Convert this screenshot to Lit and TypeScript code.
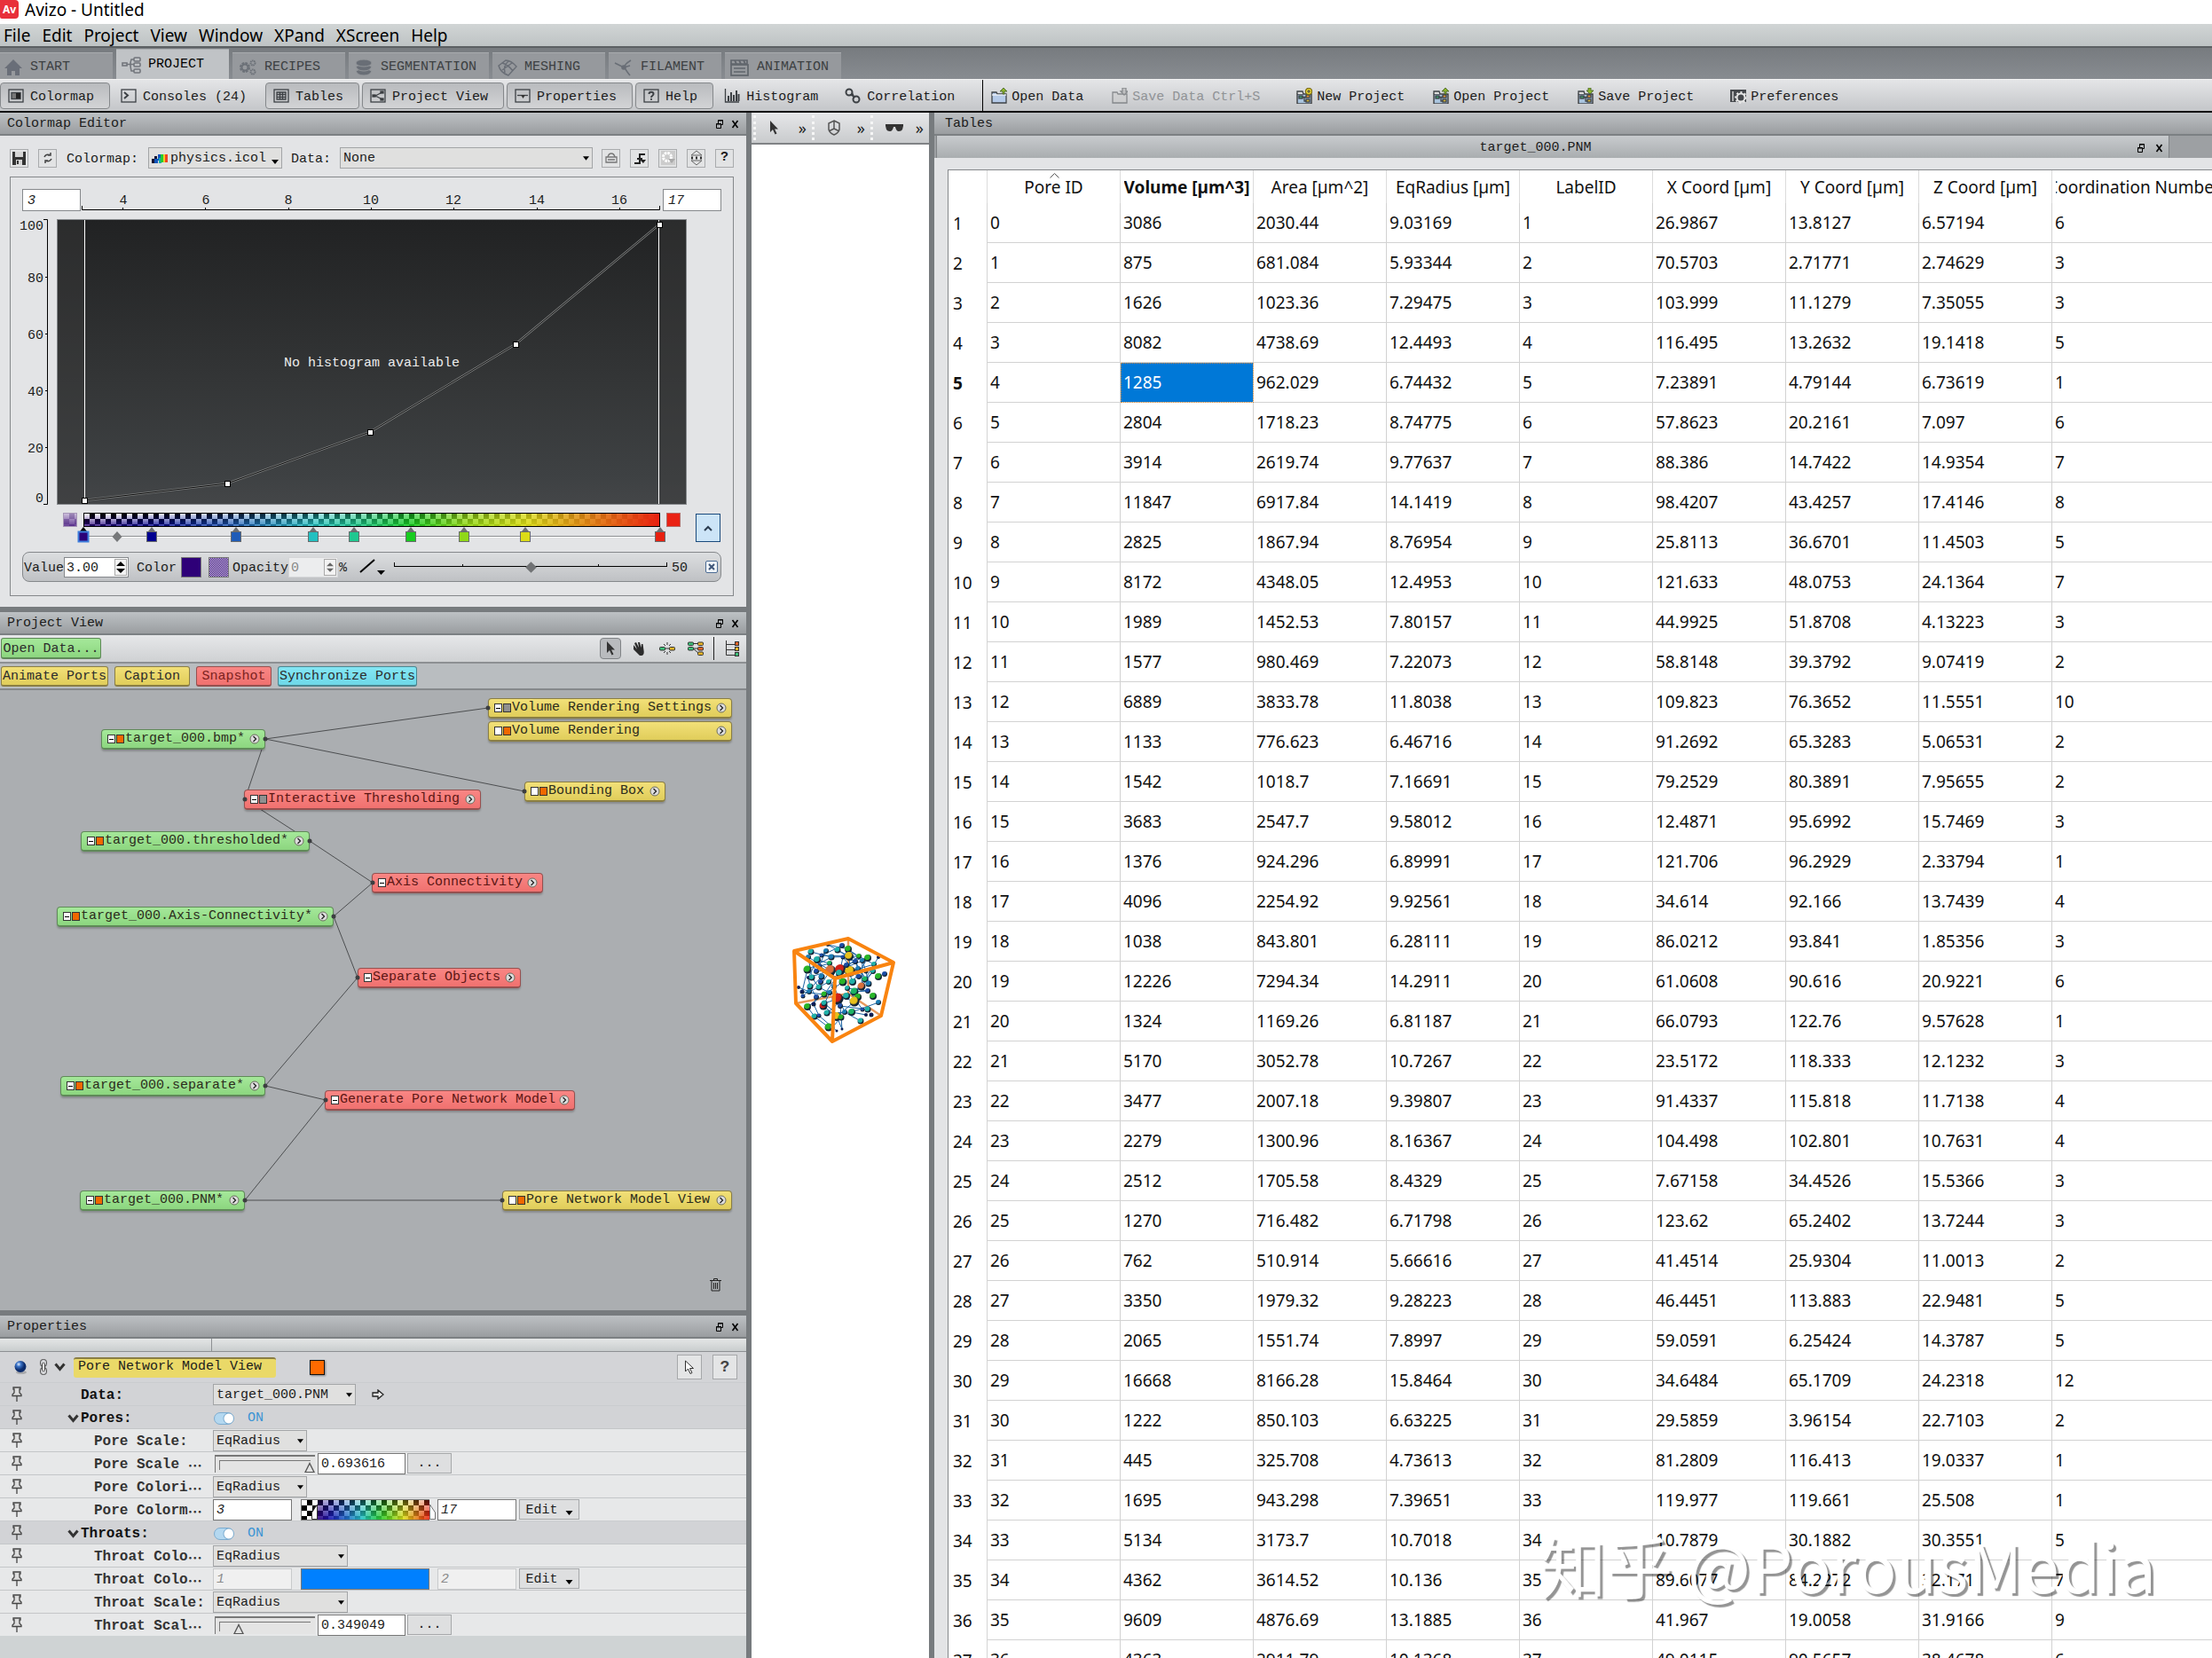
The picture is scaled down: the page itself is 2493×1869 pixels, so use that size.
import { LitElement, html, svg, css, nothing } from "lit";
import { customElement } from "lit/decorators.js";
import { classMap } from "lit/directives/class-map.js";

const base = css`
  * { box-sizing: border-box; }
  :host { display: block; font-family: "Liberation Mono", monospace; font-size: 15px; line-height: 20px; color: #1c1c1c; }
  button, input, select { font: inherit; color: inherit; margin: 0; padding: 0; border-radius: 0; }
  button { display: flex; align-items: center; justify-content: center; background: none; border: none; white-space: nowrap; }
  input { min-width: 0; }
  svg { display: block; flex: none; }
  .panel-title { display: flex; align-items: center; height: 26px; padding: 2px 3px 0 8px; background: linear-gradient(#bdc1c4, #9a9da0); border-bottom: 2px solid #7c8083; font-size: 15px; font-weight: 400; margin: 0; }
  .panel-title .grow { flex: 1; }
  .panel-title button { width: 18px; height: 18px; }
  .flat { width: 21px; height: 21px; border: 1px solid #a9abad; background: #e2e3e4; }
  .combo { display: grid; align-items: center; height: 24px; }
  .combo > * { grid-area: 1 / 1; }
  .combo select { appearance: none; width: 100%; height: 24px; padding: 2px 18px 0 3px; border: 1px solid #a3a5a7; background: #e0e0df; }
  .combo svg { justify-self: end; margin-right: 4px; pointer-events: none; }
`;

const down = (w = 8) => svg`<svg width=${w} height="8" viewBox="0 0 8 8"><path d="M0 2h8L4 7z" fill="#000"/></svg>`;
const restore = svg`<svg width="10" height="12" viewBox="0 0 10 12" fill="none" stroke="#000"><path d="M3.5 5V1.5h5v5H7M3 2h6"/><path d="M1.5 5.500h5v5h-5zM1 6h6"/></svg>`;
const cross = svg`<svg width="10" height="10" viewBox="0 0 10 10" stroke="#000" stroke-width="1.600"><path d="M1.500 1l6 8M7.500 1l-6 8"/></svg>`;
const panelButtons = html`<button aria-label="Float">${restore}</button><button aria-label="Close">${cross}</button>`;
const arrowCursor = svg`<svg width="12" height="16" viewBox="0 0 12 16"><path d="M2 0v13l3-3 2.500 5.500 2-1-2.500-5h4z" fill="#333"/></svg>`;

const box18 = (inner: unknown) => svg`<svg width="18" height="18" viewBox="0 0 18 18" fill="none" stroke="#3d4145" stroke-width="1.300">${inner}</svg>`;
const frame = svg`<rect x="1" y="2" width="16" height="14"/>`;
const graph = svg`<rect x="1" y="7" width="16" height="11" fill="#a9c4de" stroke="#333"/><path d="M1 7V4h6l1 3" fill="#ddd"/><rect x="3" y="9" width="4" height="3" fill="#3c9c6c"/><rect x="11" y="8" width="4" height="3" fill="#e8963c"/><rect x="11" y="13" width="4" height="3" fill="#d3b53c"/><path d="M7 10.500h4M9 10.500V15h2"/>`;

const toolIcons: Record<string, unknown> = {
  colormap: box18(svg`${frame}<rect x="4" y="5.500" width="10" height="7" fill="#777"/><rect x="9" y="6" width="5" height="6" fill="#222" stroke="none"/>`),
  console: box18(svg`${frame}<path d="M4 5l4 3.500L4 12" stroke-width="2"/>`),
  tables: box18(svg`${frame}<path d="M4 5h10v8H4zM4 7.500h10M4 10.500h10M7.500 5v8M10.500 5v8"/>`),
  project: box18(svg`${frame}<path d="M14 5L6 9l8 4"/><rect x="3" y="8" width="3" height="2" fill="#333"/><rect x="12" y="4" width="3" height="2" fill="#333"/><rect x="12" y="12" width="3" height="2" fill="#333"/>`),
  properties: box18(svg`${frame}<path d="M3 8.500h12"/><path d="M7 8h5l-2.500 4z" fill="#333" stroke="none"/>`),
  help: box18(svg`${frame}<path d="M6.500 7c0-3 5-3 5 0 0 2-2.500 1.500-2.500 4M9 12v1.800" stroke-width="2"/>`),
  histogram: box18(svg`<path d="M1.500 1v15H17"/><path d="M5 15V9M8 15V5M11 15V8M14 15V3M16.500 15V7" stroke-width="2"/>`),
  correlation: box18(svg`<circle cx="5" cy="5" r="3.500" stroke-width="2"/><circle cx="13" cy="13" r="3.500" stroke-width="2"/><path d="M6 7.500l6 3M8 5.500l3 6" stroke-width="1.800"/>`),
  openData: box18(svg`<path d="M1 17V5h5l1 2h10v10z" fill="#b5cae8"/><path d="M1 8h16" stroke="#f2f5f8"/><path d="M13 7V4h-3l4-4 4 4h-3v3z" fill="#8cb42c" stroke="#44602a" stroke-width=".8"/>`),
  saveData: box18(svg`<g opacity=".5"><path d="M1 17V5h5l1 2h10v10z" fill="#ccc"/><path d="M12 0h4v4h2l-4 4-4-4h2z" fill="#aaa"/></g>`),
  newProject: box18(svg`${graph}<circle cx="14" cy="4" r="3.600" fill="#f0dc32" stroke="#7a6c18"/><path d="M14 2v4M12 4h4" stroke-width="1"/>`),
  openProject: box18(svg`${graph}<path d="M13 7V4h-3l4-4 4 4h-3v3z" fill="#8cb42c" stroke="#44602a" stroke-width=".8"/>`),
  saveProject: box18(svg`${graph}<path d="M12 0h3v3h3l-4 4-4-4h2z" fill="#8cb42c" stroke="#44602a" stroke-width=".8"/>`),
  preferences: box18(svg`<rect x="0" y="2" width="18" height="14" fill="#45484c" stroke="none"/><circle cx="12" cy="11" r="4.500" stroke="#e6e6e6" stroke-width="2"/><circle cx="12" cy="11" r="6" stroke="#e6e6e6" stroke-width="2" stroke-dasharray="2 2.500"/><path d="M3 4v11" stroke="#e6e6e6"/>`),
};

const tabIcons: Record<string, unknown> = {
  START: svg`<path d="M11 2L1 12h3v8h5v-5h4v5h5v-8h3z" fill="#696e78"/>`,
  PROJECT: svg`<g fill="none" stroke="#72767c" stroke-width="1.600"><rect x="1" y="9" width="5" height="3"/><rect x="14" y="3" width="7" height="4" rx="1"/><rect x="14" y="9" width="7" height="4" rx="1"/><rect x="14" y="16" width="7" height="4" rx="1"/><path d="M6 10.500h8M14 5h-3q-2 5 0 13h3"/></g>`,
  RECIPES: svg`<g fill="none" stroke="#6c7178"><circle cx="8" cy="11" r="4.500" stroke-width="3" stroke-dasharray="2.500 1"/><circle cx="8" cy="11" r="3.500" stroke-width="2"/><circle cx="17" cy="6" r="2.500" stroke-width="2" stroke-dasharray="1.500 .6"/><circle cx="17" cy="16" r="2.500" stroke-width="2" stroke-dasharray="1.500 .6"/></g>`,
  SEGMENTATION: svg`<g fill="#696e76" stroke="#94979b"><path d="M2 15q9-5 18 0-2 5-9 5t-9-5z"/><path d="M2 10q9-5 18 0-2 5-9 5t-9-5z"/><ellipse cx="11" cy="6" rx="9" ry="4"/></g>`,
  MESHING: svg`<g fill="none" stroke="#696e76" stroke-width="1.500"><path d="M1 9l8-6q6 0 12 7l-9 10Q3 17 1 9zM5 6q7 2 12 9M12 4Q6 9 8 17M5 14l11-8"/></g>`,
  FILAMENT: svg`<g fill="none" stroke="#696e76" stroke-width="1.600"><path d="M1 6l10 5M19 3q-8 5-7 8t6 9M12 11h-3M18 9l-7 2"/><circle cx="11" cy="11" r="2" fill="#696e76"/></g>`,
  ANIMATION: svg`<g fill="none" stroke="#60656c" stroke-width="1.700"><rect x="1" y="8" width="19" height="12"/><path d="M1 3h18v4H1zM5 3l2 4M10 3l2 4M15 3l2 4M4 12h13M4 16h13"/></g>`,
};

@customElement("title-bars")
class TitleBars extends LitElement {
  static styles = [base, css`
    .caption { display: flex; align-items: center; gap: 7px; height: 27px; padding-bottom: 6px; background: #fff; font-family: "Noto Sans", sans-serif; font-size: 19px; color: #000; }
    .logo { width: 21px; height: 21px; border-radius: 0 4px 4px 2px; background: #e8303a; color: #fff; font-size: 12px; font-weight: 700; line-height: 21px; text-align: center; }
    .menu { display: flex; gap: 13px; height: 27px; padding: 1px 4px; background: linear-gradient(#d1d5d5, #bec3c4); border-bottom: 2px solid #5c6063; }
    .menu button { font-family: "Noto Sans", sans-serif; font-size: 19px; color: #000; }
    .tabs { display: flex; align-items: flex-end; gap: 4px; height: 36px; background: linear-gradient(#777b7f, #888c91); border-bottom: 1px solid #f2f2f2; }
    .tabs button { justify-content: flex-start; min-width: 127px; height: 30px; gap: 8px; padding: 3px 14px 0 6px; background: #96999d; border-top: 1px solid #a9acaf; color: #3c3f42; }
    .tabs button:first-child { padding-left: 4px; }
    .tabs button.on { height: 34px; padding-bottom: 2px; background: #c0c3c6; color: #000; }
    .tools { display: flex; align-items: center; height: 37px; padding: 3px 0 2px; gap: 3px; background: linear-gradient(#e4e5e7, #c4c6c9); border-bottom: 2px solid #0c0c0c; }
    .tools button { height: 30px; gap: 7px; padding: 4px 17px 0 8px; border: 1px solid transparent; }
    .tools button svg { margin-top: -4px; }
    .tools button.on { border-color: #85888b; border-radius: 4px; background: linear-gradient(#b9bbbe, #d3d4d6); }
    .tools button.act { gap: 5px; padding: 4px 22px 0 5px; }
    .tools button:disabled { color: #909396; }
    .rule { align-self: stretch; width: 1px; margin: -3px 0 -2px 10px; background: #000; }
    .gap { width: 6px; }
  `];
  render() {
    const toggles = [["colormap", "Colormap", 1], ["console", "Consoles (24)", 0], ["tables", "Tables", 1], ["project", "Project View", 1], ["properties", "Properties", 1], ["help", "Help", 1], ["histogram", "Histogram", 0], ["correlation", "Correlation", 0]] as [string, string, number][];
    const actions = [["openData", "Open Data"], ["saveData", "Save Data Ctrl+S"], ["-", ""], ["newProject", "New Project"], ["openProject", "Open Project"], ["saveProject", "Save Project"], ["-", ""], ["preferences", "Preferences"]];
    return html`
      <div class="caption"><span class="logo">Av</span>Avizo - Untitled</div>
      <nav class="menu">${["File", "Edit", "Project", "View", "Window", "XPand", "XScreen", "Help"].map((m) => html`<button>${m}</button>`)}</nav>
      <nav class="tabs">${Object.keys(tabIcons).map((t) => html`<button class=${classMap({ on: t === "PROJECT" })}><svg width="22" height="22" viewBox="0 0 22 22">${tabIcons[t]}</svg>${t}</button>`)}</nav>
      <div class="tools">
        ${toggles.map(([i, t, on]) => html`<button class=${classMap({ on: !!on })}>${toolIcons[i]}${t}</button>`)}
        <span class="rule"></span>
        ${actions.map(([i, t]) => i === "-" ? html`<span class="gap"></span>` : html`<button class="act" ?disabled=${i === "saveData"}>${toolIcons[i]}${t}</button>`)}
      </div>`;
  }
}

const stops: [number, string][] = [[94, "#2b0078"], [171, "#000090"], [266, "#1f5cb8"], [353, "#22c0c0"], [399, "#20c890"], [463, "#18cc20"], [523, "#90d818"], [592, "#dcdc18"], [744, "#e82010"]];

@customElement("colormap-editor")
class ColormapEditor extends LitElement {
  static styles = [base, css`
    .body { padding: 13px 14px 12px 11px; background: #e3e4e6; }
    .row { display: flex; align-items: center; height: 24px; }
    .row > span:not(.combo), .row > label, .point > label, .point > span:not(.spin) { padding-top: 3px; }
    .row .flat { margin-right: 11px; }
    .row .flat:last-child { margin-right: 0; }
    .map { justify-content: flex-start; width: 151px; height: 24px; margin: 0 10px 0 11px; padding: 2px 3px 0; gap: 3px; border: 1px solid #a3a5a7; background: #e0e0df; }
    .map svg:last-child { margin: 6px 0 0 auto; }
    .data { flex: 1; margin: 0 10px; }
    .frame { margin-top: 9px; padding: 13px 13px 15px; border: 1px solid #85888b; }
    .range { display: flex; height: 25px; margin-bottom: 2px; }
    .range input { width: 66px; height: 25px; padding: 2px 0 0 5px; border: 1px solid #85888b; background: #fff; font-style: italic; }
    .range svg { flex: 1; height: 25px; overflow: visible; }
    text { font-family: "Liberation Mono", monospace; font-size: 15px; fill: #1c1c1c; }
    .plot { width: 100%; height: auto; overflow: visible; }
    .note { fill: #ececec; }
    .ramps { display: grid; grid-template-columns: 46px 16px minmax(0, 1fr) 16px 45px; grid-template-rows: 16px 18px; margin: 4px 1px 10px 0; }
    .under, .over { grid-row: 1; }
    .under { grid-column: 2; background: linear-gradient(#b9a4cf66, #4b1e84cc), repeating-conic-gradient(#8b76a8 0 25%, #d9cfe4 0 50%) 0 0 / 12px 12px; border: 1px solid #a797b8; }
    .over { grid-column: 4; background: #ea2214; border: 1px solid #b46a66; }
    .ramp { position: relative; grid-column: 3; margin: 0 7px; border: 1px solid #000; background: repeating-conic-gradient(#000 0 25%, #fff 0 50%) 0 0 / 12px 12px; }
    .ramp::before, .ramp::after { content: ""; position: absolute; inset: 0; background: linear-gradient(90deg, #2b0078, #000090 12%, #1f5cb8 26%, #22c0c0 40%, #20c890 47%, #18cc20 57%, #90d818 66%, #dcdc18 77%, #e82010); }
    .ramp::before { mask-image: linear-gradient(transparent, #000c); }
    .ramp::after { mask-image: linear-gradient(90deg, transparent 5%, #0009 60%, #000); }
    .handles { grid-column: 3; grid-row: 2; width: calc(100% - 14px); height: 18px; margin: 0 7px; overflow: visible; }
    .fold { grid-column: 5; grid-row: 1 / 3; align-self: center; justify-self: end; height: 32px; width: 28px; border: 1px solid #1a4a7c; background: #cce4f7; }
    .point { display: flex; align-items: center; height: 34px; padding: 0 3px 0 1px; border: 1px solid #85888b; border-radius: 8px; background: linear-gradient(#dcdee0, #bfc1c4); }
    .spin { display: flex; align-items: center; height: 23px; border: 1px solid #85888b; background: #fff; padding-right: 1px; margin-right: 9px; }
    .spin input { width: 56px; height: 21px; padding: 2px 0 0 2px; border: none; background: none; }
    .spin button { width: 14px; height: 19px; border: 1px solid #aaa; background: #f3f3f3; }
    .spin.off { margin-right: 1px; border-color: #d5d6d8; background: #ecedee; color: #888; }
    .spin.off input { width: 39px; }
    .chip { width: 23px; height: 23px; margin: 0 8px 0 5px; border: 1px solid #777; background: #2e0078; }
    .chip.half { margin: 0 4px 0 0; background: repeating-conic-gradient(#2e0078 0 25%, #e0d8ea 0 50%) 0 0 / 2px 2px; }
    .curve { margin: 0 10px 0 14px; }
    .mid { appearance: none; flex: 1; height: 20px; margin-right: 5px; background:
      linear-gradient(#000, #000) 0 9px / 100% 1px no-repeat, linear-gradient(#000, #000) 0 5px / 1px 5px no-repeat, linear-gradient(#000, #000) 100% 5px / 1px 5px no-repeat,
      linear-gradient(#000, #000) 25% 7px / 1px 2px no-repeat, linear-gradient(#000, #000) 75% 7px / 1px 2px no-repeat; }
    .mid::-webkit-slider-thumb { appearance: none; width: 9px; height: 9px; background: #707274; transform: rotate(45deg); }
    .shut { width: 14px; height: 14px; margin-left: 20px; border: 1px solid #4c6c94; border-radius: 2px; background: #eef3f8; }
  `];
  render() {
    const pts = [[95, 564], [256, 545], [417, 487], [581, 388], [743, 253]];
    const line = pts.map((p) => p.join(",")).join(" ");
    return html`
      <h2 class="panel-title"><span class="grow">Colormap Editor</span>${panelButtons}</h2>
      <div class="body">
        <div class="row">
          <button class="flat" aria-label="Save"><svg width="15" height="15" viewBox="0 0 15 15"><path d="M0 0h15v15H0z" fill="#333"/><path d="M3 0h9v6H3zM4 9h7v6H4z" fill="#d5d5d5"/><path d="M5 10h2v4H5z" fill="#333"/></svg></button>
          <button class="flat" aria-label="Reload"><svg width="12" height="14" viewBox="0 0 12 14" fill="none" stroke="#444" stroke-width="1.500"><path d="M2 6q2-4 7-2M9 1v3H6M10 8q-2 4-7 2M3 13v-3h3"/></svg></button>
          <span>Colormap:</span>
          <button class="map"><svg width="18" height="12" viewBox="0 0 18 12"><path d="M0 6h3v5H0zM3 3h3v6H3z" fill="#113"/><path d="M3 6h4v5H3zM7 1h3v7H7z" fill="#15b"/><path d="M8 5h3v6H8z" fill="#1aa"/><path d="M10 1h3v9h-3z" fill="#2c3"/><path d="M13 1h2v9h-2z" fill="#ec2"/><path d="M15 1h3v9h-3z" fill="#e42"/></svg>physics.icol${down()}</button>
          <label for="data">Data:</label>
          <span class="combo data"><select id="data"><option>None</option></select>${down(7)}</span>
          <button class="flat" aria-label="Histogram range"><svg width="14" height="12" viewBox="0 0 14 12" fill="none" stroke="#777" stroke-width="1.300"><path d="M1 5h12v6H1zM3 5q1-4 4-4t4 4M3 8h8"/></svg></button>
          <button class="flat" aria-label="Step"><svg width="14" height="15" viewBox="0 0 14 15" fill="none" stroke="#222" stroke-width="2"><path d="M1 13h6V7M7 7V3h6M4 8h6"/><path d="M7 9h7l-3 4z" fill="#222" stroke="none"/></svg></button>
          <button class="flat" aria-label="Options" disabled><svg width="16" height="16" viewBox="0 0 16 16"><rect width="16" height="16" fill="#ccc"/><circle cx="7" cy="7" r="4.500" fill="none" stroke="#fff" stroke-width="3" stroke-dasharray="2.500 1"/><path d="M8 9h8l-4 5z" fill="#aaa"/></svg></button>
          <button class="flat" aria-label="Autoscale"><svg width="16" height="18" viewBox="0 0 16 18" fill="none" stroke="#666"><path d="M2 6l6-5 6 5zM2 12h12l-6 5z"/><path d="M2 9h2M7 9h2M12 9h2" stroke="#333" stroke-width="3"/></svg></button>
          <button class="flat" aria-label="Help"><b>?</b></button>
        </div>
        <div class="frame">
          <div class="range">
            <input aria-label="Minimum" value="3">
            <svg viewBox="91 213 656 25" preserveAspectRatio="none">
              <path d="M92.500 232v4.500h651V232M138.500 234v2M231.500 234v2M325.500 234v2M418.500 234v2M511.500 234v2M605.500 234v2M698.500 234v2" fill="none" stroke="#000"/>
              ${[4, 6, 8, 10, 12, 14, 16].map((n) => svg`<text x=${Math.round(92 + (n - 3) * 46.6)} y="230" text-anchor="middle">${n}</text>`)}
            </svg>
            <input aria-label="Maximum" value="17">
          </div>
          <svg class="plot" viewBox="25 240 788 334">
            <defs>
              <linearGradient id="bg" x1="0" y1="0" x2="0" y2="1"><stop offset="0" stop-color="#212223"/><stop offset=".55" stop-color="#333536"/><stop offset=".9" stop-color="#3e4143"/><stop offset="1" stop-color="#444648"/></linearGradient>
            </defs>
            <path d="M49 247.500h4.500v321H49M51 312.500h2M51 376.500h2M51 440.500h2M51 504.500h2" fill="none" stroke="#000"/>
            ${[[100, 259], [80, 318], [60, 382], [40, 446], [20, 510], [0, 566]].map(([n, y]) => svg`<text x="49" y=${y} text-anchor="end">${n}</text>`)}
            <rect x="64.500" y="247.500" width="709" height="321" fill="url(#bg)" stroke="#85888b"/>
            <path d="M65 248h30v320H65zM743 248h30v320h-30z" fill="#3c3c3c" opacity=".4"/>
            <path d="M95.500 248v320M742.500 248v320" stroke="#fff"/>
            <polyline points=${line} fill="none" stroke="#7c7e7e" stroke-width="2.500"/>
            <polyline points=${line} fill="none" stroke="#111"/>
            ${pts.map(([x, y]) => svg`<rect x=${x - 2.5} y=${y - 2.5} width="6" height="6" fill="#fff" stroke="#000"/>`)}
            <text class="note" x="419" y="413" text-anchor="middle">No histogram available</text>
          </svg>
          <div class="ramps">
            <span class="under"></span><span class="ramp"></span><span class="over"></span>
            <svg class="handles" viewBox="94 594 650 18" preserveAspectRatio="none">
              <path d="M94 604.500h650" stroke="#8c8e90"/><path d="M94 605.500h650" stroke="#fff"/>
              <path d="M132 599l5.500 6-5.500 6-5.500-6z" fill="#76787a"/>
              ${stops.map(([x, c], i) => svg`<path d="M${x - 4} 599l4-5 4 5z" fill=${i ? "#6e7072" : "#000"}/><rect x=${x - 5.5} y="599.500" width="11" height="11" fill=${c} stroke=${i ? "#686a6c" : "#3c7cdc"} stroke-width=${i ? 1 : 2}/>`)}
            </svg>
            <button class="fold" aria-label="Collapse"><svg width="10" height="7" viewBox="0 0 10 7" fill="none" stroke="#2c3c50" stroke-width="2"><path d="M1 6l4-4 4 4"/></svg></button>
          </div>
          <div class="point">
            <label for="val">Value</label>
            <span class="spin"><input id="val" value="3.00"><button aria-label="Step value"><svg width="10" height="15" viewBox="0 0 10 15"><path d="M0 6l5-5 5 5zM0 9h10l-5 5z"/></svg></button></span>
            <span>Color</span><button class="chip" aria-label="Color"></button><button class="chip half" aria-label="Opacity color"></button>
            <label for="op">Opacity</label>
            <span class="spin off"><input id="op" value="0" disabled><button disabled aria-label="Step opacity"><svg width="8" height="13" viewBox="0 0 10 15"><path d="M0 6l5-5 5 5zM0 9h10l-5 5z" fill="#666"/></svg></button></span>
            <span>%</span>
            <button class="curve" aria-label="Curve"><svg width="29" height="22" viewBox="0 0 29 22"><path d="M1 17L17 3" stroke="#000" stroke-width="2"/><path d="M20 15h9l-4.500 5z"/></svg></button>
            <input class="mid" type="range" min="0" max="100" value="50" aria-label="Midpoint">
            <span>50</span>
            <button class="shut" aria-label="Remove point"><svg width="8" height="8" viewBox="0 0 8 8" stroke="#3c5478" stroke-width="2"><path d="M1 1l6 6M7 1L1 7"/></svg></button>
          </div>
        </div>
      </div>`;
  }
}

// x, y, width, colour, label, visibility toggle marks
const nodes: [number, number, number, string, string, string][] = [
  [550, 9, 275, "yellow", "Volume Rendering Settings", "-g"], [550, 35, 275, "yellow", "Volume Rendering", "wo"],
  [114, 44, 185, "green", "target_000.bmp*", "-o"], [591, 103, 159, "yellow", "Bounding Box", "wo"],
  [275, 112, 267, "red", "Interactive Thresholding", "-g"], [91, 159, 258, "green", "target_000.thresholded*", "-o"],
  [419, 206, 193, "red", "Axis Connectivity", "-"], [64, 244, 312, "green", "target_000.Axis-Connectivity*", "-o"],
  [403, 313, 184, "red", "Separate Objects", "-"], [68, 435, 231, "green", "target_000.separate*", "-o"],
  [366, 451, 282, "red", "Generate Pore Network Model", "-"], [90, 564, 186, "green", "target_000.PNM*", "-o"],
  [566, 564, 259, "yellow", "Pore Network Model View", "wo"],
];
const links = [[299, 55, 550, 20], [299, 55, 591, 114], [299, 55, 276, 123], [276, 123, 349, 170], [349, 170, 420, 217], [376, 255, 420, 217], [376, 255, 403, 324], [299, 446, 403, 324], [299, 446, 367, 462], [276, 575, 367, 462], [276, 575, 566, 575]];
const ports = [[550, 20], [299, 55], [591, 114], [276, 123], [349, 170], [420, 217], [376, 255], [403, 324], [299, 446], [367, 462], [276, 575], [566, 575]];

@customElement("project-view")
class ProjectView extends LitElement {
  static styles = [base, css`
    :host { display: flex; flex-direction: column; min-height: 0; }
    .bar { display: flex; align-items: center; gap: 8px; height: 32px; padding: 0 4px 0 1px; background: linear-gradient(#e6e7e9, #cfd1d3); border-bottom: 2px solid #8d9093; }
    .bar .grow { flex: 1; }
    .bar .tool { width: 24px; height: 24px; }
    .bar .tool.on { border: 1px solid #808386; border-radius: 4px; background: #b9bbbe; }
    .bar .sep { width: 1px; height: 26px; background: #222; }
    .green { --c1: #a5e89a; --c2: #8cd67f; --bd: #5f8a58; }
    .yellow { --c1: #f2e078; --c2: #e0cd5a; --bd: #8a7e44; }
    .red { --c1: #f98684; --c2: #f0716f; --bd: #96504f; }
    .cyan { --c1: #84e6f4; --c2: #6ed8e8; --bd: #4a8690; }
    .pill { height: 23px; padding: 3px 1px 0; border: 1px solid var(--bd); border-bottom-width: 2px; border-radius: 3px; background: linear-gradient(var(--c1), var(--c2)); color: #2c2c2c; }
    .bar .pill { height: 24px; width: 113px; }
    .quick { display: flex; align-items: center; gap: 7px; height: 30px; padding: 0 1px; background: #b9bdc0; border-bottom: 2px solid #85888b; }
    .quick .pill { min-width: 85px; }
    .quick .red { color: #7c2220; }
    .canvas { position: relative; flex: 1; min-height: 0; overflow: hidden; background: #abaeb1; }
    .wires { position: absolute; left: 0; top: 0; overflow: visible; }
    .node { position: absolute; display: flex; align-items: center; height: 23px; padding: 0 5px 0 6px; border: 1px solid var(--bd); border-bottom-width: 2px; border-radius: 4px; background: linear-gradient(var(--c1), var(--c2)); box-shadow: 0 2px 2px #0003; color: #2c2c1c; white-space: nowrap; }
    .node.red { color: #5c1614; }
    .node i { width: 9px; height: 10px; margin-right: 1px; border: 1px solid #333; background: #fff; }
    .node i.o { background: #f06800; } .node i.g { background: #909090; }
    .node i.m { background: linear-gradient(#000, #000) 50% 50% / 5px 1px no-repeat #fff; }
    .node span { flex: 1; }
    .trash { position: absolute; right: 28px; bottom: 21px; }
  `];
  render() {
    const mark = (m: string) => html`<i class=${m === "-" ? "m" : m}></i>`;
    return html`
      <h2 class="panel-title"><span class="grow">Project View</span>${panelButtons}</h2>
      <div class="bar">
        <button class="pill green">Open Data...</button><span class="grow"></span>
        <button class="tool on" aria-label="Select">${arrowCursor}</button>
        <button class="tool" aria-label="Pan"><svg width="14" height="15" viewBox="0 0 14 15"><path d="M1 3l4 5-3-7 2-1 3 6-1-6 2 0 1.500 6 .5-4 1.500 0 1 7q1 5-2 6H8L1 8z" fill="#2c2c2c"/></svg></button>
        <button class="tool" aria-label="Show object"><svg width="18" height="16" viewBox="0 0 18 16" stroke="#333"><path d="M5 8h8M5 3l2 2M13 3l-2 2M5 13l2-2M13 13l-2-2M9 1v3M9 12v3"/><rect x=".5" y="6.500" width="6" height="3.500" rx="1" fill="#3cc078"/><rect x="11.500" y="6.500" width="6" height="3.500" rx="1" fill="#e8b428"/></svg></button>
        <button class="tool" aria-label="Auto layout"><svg width="18" height="16" viewBox="0 0 18 16" stroke="#333"><path d="M5 2.500h7M4 8h8M6 8l6 5"/><rect x=".5" y="1" width="6" height="3.500" rx="1" fill="#3cc078"/><rect x="11.500" y="1" width="6" height="3.500" rx="1" fill="#e8b428"/><rect x=".5" y="6.500" width="6" height="3.500" rx="1" fill="#3cc078"/><rect x="11.500" y="6.500" width="6" height="3.500" rx="1" fill="#e86428"/><rect x="11.500" y="12" width="6" height="3.500" rx="1" fill="#e8b428"/></svg></button>
        <span class="sep"></span>
        <button class="tool" aria-label="Tree view"><svg width="18" height="18" viewBox="0 0 18 18" fill="none" stroke="#333"><path d="M2.500 0v16.500H13M2.500 4.500H13M2.500 10.500H13"/><rect x="12.500" y="1.500" width="4" height="4" fill="#e86428"/><rect x="12.500" y="7.500" width="4" height="4" fill="#e8b428"/><rect x="12.500" y="13.500" width="4" height="4" fill="#3cc078"/></svg></button>
      </div>
      <div class="quick"><button class="pill yellow">Animate Ports</button><button class="pill yellow">Caption</button><button class="pill red">Snapshot</button><button class="pill cyan">Synchronize Ports</button></div>
      <div class="canvas">
        <svg class="wires" width="840" height="699" stroke="#4c4e50">${links.map(([a, b, c, d]) => svg`<path d="M${a} ${b}L${c} ${d}"/>`)}</svg>
        ${nodes.map(([x, y, w, c, t, m]) => html`<div class="node ${c}" style="left:${x}px;top:${y}px;width:${w}px">${m.split("").map(mark)}<span>${t}</span><svg width="12" height="12" viewBox="0 0 12 12" fill="none"><circle cx="6" cy="6" r="5" fill="#ddd" stroke="#6c6e60"/><path d="M4.500 3L7.500 6l-3 3" stroke="#222" stroke-width="1.300"/></svg></div>`)}
        <svg class="wires" width="840" height="699" fill="#3c3e40">${ports.map(([x, y]) => svg`<circle cx=${x} cy=${y} r="2.500"/>`)}</svg>
        <svg class="trash" width="13" height="16" viewBox="0 0 13 16" fill="none" stroke="#222"><path d="M0 3.500h13M4.500 3V1.500h4V3M2 4v11h9V4M4.500 6v7M6.500 6v7M8.500 6v7"/></svg>
      </div>`;
  }
}

type Prop = { label: string; cut?: boolean; kind: string; section?: boolean; value?: string; wide?: boolean; at?: number };
const props: Prop[] = [
  { label: "Data:", kind: "data", section: true, value: "target_000.PNM" },
  { label: "Pores:", kind: "toggle", section: true },
  { label: "Pore Scale:", kind: "select", value: "EqRadius" },
  { label: "Pore Scale ", cut: true, kind: "slider", value: "0.693616", at: 100 },
  { label: "Pore Colori", cut: true, kind: "select", value: "EqRadius" },
  { label: "Pore Colorm", cut: true, kind: "map" },
  { label: "Throats:", kind: "toggle", section: true },
  { label: "Throat Colo", cut: true, kind: "select", value: "EqRadius", wide: true },
  { label: "Throat Colo", cut: true, kind: "solid" },
  { label: "Throat Scale:", kind: "select", value: "EqRadius", wide: true },
  { label: "Throat Scal", cut: true, kind: "slider", value: "0.349049", at: 20 },
];

@customElement("properties-panel")
class PropertiesPanel extends LitElement {
  static styles = [base, css`
    :host { min-height: 386px; background: #cfd3d4; }
    .cols { display: grid; grid-template-columns: 239px 1fr; height: 15px; background: linear-gradient(#e4e6e6, #c9cdce); border-bottom: 1px solid #8d9093; }
    .cols span:first-child { border-right: 1px solid #8d9093; }
    .head { display: flex; align-items: center; height: 34px; padding: 0 10px 0 16px; background: #d3d4d7; }
    .name { width: 228px; height: 23px; margin-left: 9px; padding: 0 5px; border-top: 2px solid #8a7e44; border-radius: 3px; background: #ead968; line-height: 18px; }
    .sw { width: 17px; height: 17px; margin-left: 38px; border: 1px solid #111; background: #ff6a00; box-shadow: 1px 1px 2px #0006; }
    .grow { flex: 1; }
    .big { width: 28px; height: 28px; margin-left: 12px; border: 1px solid #a6a8aa; background: #e4e5e6; font-size: 18px; font-weight: 700; color: #444; }
    .prop { display: grid; grid-template-columns: 38px 202px 1fr; align-items: center; height: 26px; border-top: 1px solid #c4c6c8; background: #e7e8e9; }
    .prop.section { background: #d2d3d6; border-color: #cacccf; }
    .prop > svg { justify-self: center; }
    .name2 { display: flex; align-items: center; padding: 2px 0 0 68px; font-size: 16px; font-weight: 700; color: #333; white-space: pre; }
    .section .name2 { padding-left: 38px; color: #111; }
    .section .name2.plain { padding-left: 53px; }
    .section .name2 svg { margin-right: 2px; }
    .cut { font-family: "Noto Sans CJK SC", sans-serif; font-size: 16px; line-height: 20px; }
    .val { display: flex; align-items: center; height: 24px; }
    .val .combo { width: 106px; } .val .combo.wide { width: 152px; } .val .combo.data { width: 161px; margin-right: 18px; }
    .toggle { display: flex; align-items: center; gap: 15px; padding-top: 2px; color: #3c94d4; }
    .toggle input { appearance: none; width: 23px; height: 14px; margin-left: 1px; border: 1px solid #7cacd0; border-radius: 7px; background: radial-gradient(circle at 16px 6px, #fff 0 5px, #7cacd0 6px, #b4d8f0 7px); }
    .track { appearance: none; width: 113px; height: 20px; margin: 0 3px 0 2px; border-left: 1px solid #777; border-top: 2px solid #777; padding: 4px 0 0; background:
      linear-gradient(#777, #777) 4px 4px / 103px 1px no-repeat, linear-gradient(#777, #777) 4px 4px / 1px 11px no-repeat, #e4e4e4; }
    .track::-webkit-slider-thumb { appearance: none; width: 12px; height: 12px; margin-top: 3px; background: #555; clip-path: polygon(evenodd, 50% 0, 100% 100%, 0 100%, 50% 0, 50% 3px, 2px 11px, 10px 11px, 50% 3px); }
    .num { width: 89px; height: 24px; padding: 2px 0 0 3px; border: 1px solid #777; background: #fff; }
    .num.long { width: 99px; margin-right: 2px; }
    .num.it { font-style: italic; }
    .num:disabled { border-color: #c8cacc; background: #f0f0f0; color: #8c8c8c; }
    .more { width: 50px; height: 23px; border: 1px solid #a6a8aa; background: #dedfe0; }
    .edit { width: 68px; height: 23px; margin-left: 3px; gap: 8px; padding-top: 2px; border: 1px solid #a6a8aa; background: #dedfe0; }
    .edit svg { margin-top: 5px; }
    .swatch { position: relative; width: 145px; height: 24px; margin: 0 9px 0 10px; border: 1px solid #777; background: #0080ff; }
    .swatch.ramp { background: repeating-conic-gradient(#000 0 25%, #fff 0 50%) 0 0 / 12px 12px; width: 152px; margin-right: 2px; border-right: none; }
    .swatch.ramp::before { content: ""; position: absolute; inset: 0 7px 0 18px; background: linear-gradient(90deg, #2b0078, #1a1ab0 12%, #1f6cc8 26%, #22c0c0 40%, #20c850 52%, #40cc20 60%, #dcdc18 77%, #e82010); mask-image: linear-gradient(#0005, #000e); }
    .swatch.ramp::after { content: ""; position: absolute; inset: -1px 0 -1px auto; width: 7px; background: #e7e8e9; }
    .swatch svg { position: absolute; z-index: 1; bottom: 0; }
    .swatch .lo { left: 11px; } .swatch .hi { right: 0; }
  `];
  control(p: Prop, id: string) {
    if (p.kind === "toggle") return html`<span class="toggle"><input id=${id} type="checkbox" checked>ON</span>`;
    if (p.kind === "select" || p.kind === "data") return html`<span class=${classMap({ combo: true, wide: !!p.wide, data: p.kind === "data" })}><select id=${id}><option>${p.value}</option></select>${down(7)}</span>
      ${p.kind === "data" ? html`<button aria-label="Go to data"><svg width="14" height="12" viewBox="0 0 14 12" fill="#eee" stroke="#222" stroke-width="1.300"><path d="M1 4h6V1l6 5-6 5V8H1z"/></svg></button>` : nothing}`;
    if (p.kind === "slider") return html`<input class="track" type="range" min="0" max="100" .value=${String(p.at)} aria-label=${p.label}><input class="num long" id=${id} value=${p.value}><button class="more">...</button>`;
    const off = p.kind === "solid";
    return html`<input class="num it" id=${id} value=${off ? "1" : "3"} ?disabled=${off}>
      <span class=${classMap({ swatch: true, ramp: !off })}>${off ? nothing : html`<svg class="lo" width="7" height="18" viewBox="0 0 7 18"><path d="M6.500 1L.5 10v7.500h6z" fill="#fff" stroke="#333"/></svg><svg class="hi" width="7" height="18" viewBox="0 0 7 18"><path d="M.5 1l6 9v7.500h-6z" fill="#fff" stroke="#777"/></svg>`}</span>
      <input class="num it" aria-label="Maximum" value=${off ? "2" : "17"} ?disabled=${off}><button class="edit">Edit${down(9)}</button>`;
  }
  render() {
    const chev = svg`<svg width="13" height="10" viewBox="0 0 13 10" fill="none" stroke="#333" stroke-width="3"><path d="M1.500 1.500l5 6 5-6"/></svg>`;
    return html`
      <h2 class="panel-title"><span class="grow">Properties</span>${panelButtons}</h2>
      <div class="cols"><span></span><span></span></div>
      <div class="head">
        <svg width="15" height="16" viewBox="0 0 15 16"><defs><radialGradient id="ball" cx=".35" cy=".3"><stop offset="0" stop-color="#e4f0ff"/><stop offset=".4" stop-color="#3c74c8"/><stop offset="1" stop-color="#0c2c6c"/></radialGradient></defs><ellipse cx="8" cy="14" rx="6" ry="2" fill="#0003"/><circle cx="7" cy="7.500" r="6.500" fill="url(#ball)"/></svg>
        <svg width="30" height="20" viewBox="-14 0 30 20" fill="none" stroke="#444"><rect x=".5" y="1.500" width="7" height="8" rx="3"/><rect x=".5" y="10.500" width="7" height="8" rx="3"/><rect x="2.500" y="5.500" width="3" height="9" rx="1" fill="#eee"/></svg>
        ${chev}
        <span class="name">Pore Network Model View</span><span class="sw"></span><span class="grow"></span>
        <button class="big" aria-label="Pick"><svg width="12" height="17" viewBox="0 0 12 17"><path d="M1.500 1v12l3-3 2.500 5.500 2-1-2.500-5h4z" fill="#fff" stroke="#333"/></svg></button>
        <button class="big">?</button>
      </div>
      ${props.map((p, i) => html`<div class=${classMap({ prop: true, section: !!p.section })}>
        <svg width="12" height="18" viewBox="0 0 12 18" fill="#ddd" stroke="#444" stroke-width="1.300"><path d="M2 1h8v2H9v4l2 2v1.500H1V9l2-2V3H2zM6 10.500V17"/></svg>
        <label class=${classMap({ name2: true, plain: p.kind === "data" })} for="p${i}">${p.kind === "toggle" ? chev : nothing}${p.label}${p.cut ? html`<span class="cut">⋯</span>` : nothing}</label>
        <span class="val">${this.control(p, "p" + i)}</span>
      </div>`)}`;
  }
}

const palette = ["#1c4ca4", "#1c7cb4", "#20b0a8", "#1cb464", "#28b428", "#e8c01c", "#d8703c", "#d02018", "#0c1c5c"];
// x, y, radius, palette index
const balls = [[933, 1065, 2, 8], [949, 1066, 3, 0], [914, 1073, 3.5, 2], [931, 1072, 3, 1], [944, 1071, 3.5, 2], [956, 1070, 4, 4], [926, 1077, 2.5, 0], [937, 1079, 3.5, 1], [921, 1082, 4, 2], [911, 1079, 3, 1], [950, 1079, 2.5, 0], [957, 1078, 5, 5], [968, 1078, 3, 4], [978, 1080, 4, 4], [990, 1079, 2, 8], [964, 1084, 3, 0], [972, 1083, 3, 1], [985, 1087, 3, 2], [910, 1093, 4.5, 4], [935, 1086, 3, 3], [936, 1094, 6, 6], [947, 1093, 6, 7], [958, 1095, 6, 5], [946, 1097, 4, 2], [924, 1089, 2.5, 0], [954, 1088, 3, 0], [967, 1092, 3, 1], [976, 1095, 2.5, 0], [984, 1095, 3, 2], [990, 1101, 4, 4], [997, 1098, 3, 0], [911, 1102, 2, 8], [915, 1102, 3.5, 2], [926, 1101, 3.5, 1], [934, 1107, 3, 2], [950, 1107, 4.5, 4], [961, 1107, 4, 2], [975, 1104, 3.5, 3], [979, 1109, 3.5, 1], [971, 1112, 4.5, 6], [900, 1113, 2, 8], [904, 1118, 2.5, 8], [913, 1112, 3.5, 2], [923, 1113, 3.5, 2], [905, 1123, 2.5, 0], [912, 1118, 3, 1], [929, 1121, 3.5, 4], [920, 1124, 3, 0], [935, 1119, 3, 1], [944, 1126, 6.5, 7], [954, 1123, 4, 2], [963, 1118, 4.5, 3], [967, 1124, 4, 4], [963, 1129, 5.5, 5], [984, 1123, 4, 4], [990, 1130, 3, 1], [978, 1117, 3, 0], [910, 1135, 4, 4], [917, 1132, 2.5, 8], [928, 1134, 4.5, 7], [929, 1131, 3.5, 2], [932, 1142, 3.5, 2], [918, 1146, 3.5, 2], [923, 1145, 2.5, 0], [943, 1146, 5, 5], [948, 1147, 3.5, 4], [960, 1141, 4, 3], [952, 1141, 3, 1], [972, 1138, 2.5, 0], [978, 1138, 3.5, 2], [982, 1144, 2.5, 8], [976, 1144, 2, 8], [970, 1151, 3.5, 2], [934, 1158, 4.5, 4], [943, 1162, 1.5, 8], [949, 1160, 1.5, 8], [938, 1158, 2.5, 2], [925, 1107, 3, 0], [940, 1112, 3, 1], [955, 1114, 3, 2], [947, 1134, 3, 0], [920, 1095, 3, 0], [968, 1101, 3, 0]];

@customElement("scene-viewer")
class SceneViewer extends LitElement {
  static styles = [base, css`
    :host { display: flex; flex-direction: column; min-height: 0; margin-left: 1px; background: #fff; }
    .bar { display: grid; grid-template-columns: repeat(3, 1fr); height: 36px; padding: 3px 0 3px 2px; background: linear-gradient(#e6e7e9, #c9cbcd); border-bottom: 2px solid #808386; }
    .group { display: flex; align-items: center; justify-content: space-between; border-left: 3px dotted #f6f6f6; font-family: "Noto Sans", sans-serif; font-size: 18px; padding: 0 6px 0 14px; }
    .view { flex: 1; display: flex; flex-direction: column; justify-content: center; min-height: 0; }
    .view svg { width: 100%; height: auto; }
  `];
  render() {
    return html`
      <div class="bar">
        <div class="group"><button aria-label="Interact">${arrowCursor}</button><button aria-label="More">»</button></div>
        <div class="group"><button aria-label="View orientation"><svg width="16" height="18" viewBox="0 0 16 18" fill="none" stroke="#555" stroke-width="1.500"><path d="M8 1l6 3v7q-1 4-6 6-5-2-6-6V4zM8 2v8M8 10l-6 3M8 10l6 3"/></svg></button><button aria-label="More">»</button></div>
        <div class="group"><button aria-label="Stereo"><svg width="20" height="10" viewBox="0 0 20 10" fill="#333"><path d="M0 1h20v2l-1 4q-1 2-4 2t-4-5h-2q-1 5-4 5T1 7L0 3z"/></svg></button><button aria-label="More">»</button></div>
      </div>
      <div class="view">
        <svg viewBox="847 846 200 340">
          <defs>${palette.map((c, i) => svg`<radialGradient id="s${i}" cx=".4" cy=".35"><stop offset="0" stop-color=${c}/><stop offset=".7" stop-color=${c}/><stop offset="1" stop-color="#123"/></radialGradient>`)}</defs>
          <path d="M956 1058v62M956 1120l-59 11M956 1120l37 25" stroke="#e07828" stroke-width="2.500" opacity=".75"/>
          <g stroke="#1c64a4" stroke-width="1">${balls.map(([x, y], i) => [5, 11, 23].map((k) => { const b = balls[(i + k) % balls.length]; return Math.hypot(b[0] - x, b[1] - y) < 32 ? svg`<path d="M${x} ${y}L${b[0]} ${b[1]}"/>` : nothing; }))}</g>
          ${balls.map(([x, y, r, c]) => svg`<circle cx=${x} cy=${y} r=${r} fill="url(#s${c})"/>`)}
          <g fill="none" stroke="#f98410" stroke-width="4" stroke-linejoin="round"><path d="M895 1072l61-14 51 27-66 18zM895 1072l2 59 41 43 55-29 14-60M941 1103l-3 71"/></g>
        </svg>
      </div>`;
  }
}

const columns = ["Pore ID", "Volume [µm^3]", "Area [µm^2]", "EqRadius [µm]", "LabelID", "X Coord [µm]", "Y Coord [µm]", "Z Coord [µm]", "Coordination Number"];
const data = `3086 2030.44 9.03169 26.9867 13.8127 6.57194 6
875 681.084 5.93344 70.5703 2.71771 2.74629 3
1626 1023.36 7.29475 103.999 11.1279 7.35055 3
8082 4738.69 12.4493 116.495 13.2632 19.1418 5
1285 962.029 6.74432 7.23891 4.79144 6.73619 1
2804 1718.23 8.74775 57.8623 20.2161 7.097 6
3914 2619.74 9.77637 88.386 14.7422 14.9354 7
11847 6917.84 14.1419 98.4207 43.4257 17.4146 8
2825 1867.94 8.76954 25.8113 36.6701 11.4503 5
8172 4348.05 12.4953 121.633 48.0753 24.1364 7
1989 1452.53 7.80157 44.9925 51.8708 4.13223 3
1577 980.469 7.22073 58.8148 39.3792 9.07419 2
6889 3833.78 11.8038 109.823 76.3652 11.5551 10
1133 776.623 6.46716 91.2692 65.3283 5.06531 2
1542 1018.7 7.16691 79.2529 80.3891 7.95655 2
3683 2547.7 9.58012 12.4871 95.6992 15.7469 3
1376 924.296 6.89991 121.706 96.2929 2.33794 1
4096 2254.92 9.92561 34.614 92.166 13.7439 4
1038 843.801 6.28111 86.0212 93.841 1.85356 3
12226 7294.34 14.2911 61.0608 90.616 20.9221 6
1324 1169.26 6.81187 66.0793 122.76 9.57628 1
5170 3052.78 10.7267 23.5172 118.333 12.1232 3
3477 2007.18 9.39807 91.4337 115.818 11.7138 4
2279 1300.96 8.16367 104.498 102.801 10.7631 4
2512 1705.58 8.4329 7.67158 34.4526 15.5366 3
1270 716.482 6.71798 123.62 65.2402 13.7244 3
762 510.914 5.66616 41.4514 25.9304 11.0013 2
3350 1979.32 9.28223 46.4451 113.883 22.9481 5
2065 1551.74 7.8997 59.0591 6.25424 14.3787 5
16668 8166.28 15.8464 34.6484 65.1709 24.2318 12
1222 850.103 6.63225 29.5859 3.96154 22.7103 2
445 325.708 4.73613 81.2809 116.413 19.0337 1
1695 943.298 7.39651 119.977 119.661 25.508 1
5134 3173.7 10.7018 10.7879 30.1882 30.3551 5
4362 3614.52 10.136 89.6077 84.2272 32.171 7
9609 4876.69 13.1885 41.967 19.0058 31.9166 9
4363 2911.79 10.1368 49.0115 90.5657 38.4678 6`.split("\n").map((l, i) => { const v = l.split(" "); return [String(i), ...v.slice(0, 3), String(i + 1), ...v.slice(3)]; });

@customElement("data-tables")
class DataTables extends LitElement {
  static styles = [base, css`
    :host { position: relative; display: flex; flex-direction: column; min-height: 0; overflow: hidden; background: #e3e4e6; }
    .panel-title { padding-left: 12px; flex: none; }
    .sub { display: flex; height: 25px; flex: none; background: #9da0a3; padding: 0 48px 0 2px; }
    .sub div { flex: 1; display: flex; align-items: center; padding: 2px 0 0 3px; background: linear-gradient(#c8cbce, #a9adaf); border: 1px solid #808386; border-width: 0 1px; }
    .sub span { flex: 1; text-align: center; }
    .sub button { width: 21px; height: 20px; }
    .wrap { flex: 1; min-height: 0; overflow: hidden; margin: 13px 0 0 15px; border: 1px solid #85888b; border-width: 1px 0 0 1px; background: #fff; }
    table { width: 100%; table-layout: fixed; border-collapse: separate; border-spacing: 0; font-family: "Noto Sans", sans-serif; font-size: 19px; line-height: 24px; color: #111; }
    .first { width: 44px; } .col { width: 150px; }
    th { padding: 0 4px; font-weight: 400; border-right: 1px solid #dcdcdc; }
    thead th { height: 37px; }
    thead div { display: flex; justify-content: center; overflow: hidden; padding-top: 1px; white-space: nowrap; }
    thead .sorted { position: relative; }
    .sorted svg { position: absolute; left: 70px; top: 3px; }
    tbody th { padding-left: 5px; text-align: left; border-right-color: #d4d4d4; }
    td { height: 45px; padding: 0 3px; border: solid #d2d2d2; border-width: 0 1px 1px 0; }
    td:last-child, th:last-child { border-right: none; }
    thead th:last-child { padding-right: 0; }
    .strong { font-weight: 700; }
    .sel { background: #0078d7; color: #fff; outline: 1px dotted #d08a3c; outline-offset: -1px; }
    .mark { position: absolute; right: 63px; bottom: 61px; font-family: "Noto Sans CJK SC", sans-serif; font-size: 75px; line-height: 88px; color: #fff; text-shadow: 3px 3px 1px #0000006b; white-space: nowrap; pointer-events: none; }
  `];
  render() {
    return html`
      <h2 class="panel-title">Tables</h2>
      <div class="sub"><div><span>target_000.PNM</span><button aria-label="Float">${restore}</button><button aria-label="Close">${cross}</button></div></div>
      <div class="wrap"><table>
        <colgroup><col class="first">${columns.map((_, i) => html`<col class=${i < 8 ? "col" : "rest"}>`)}</colgroup>
        <thead><tr><th></th>${columns.map((c, i) => html`<th scope="col" class=${classMap({ sorted: i === 0, strong: i === 1 })}><div>${i === 0 ? svg`<svg width="11" height="6" viewBox="0 0 11 6" fill="none" stroke="#555"><path d="M.5 5.500l5-5 5 5"/></svg>` : nothing}${c}</div></th>`)}</tr></thead>
        <tbody>${data.map((r, i) => html`<tr><th scope="row" class=${classMap({ strong: i === 4 })}>${i + 1}</th>${r.map((v, j) => html`<td class=${classMap({ sel: i === 4 && j === 1 })}>${v}</td>`)}</tr>`)}</tbody>
      </table></div>
      <div class="mark">知乎 @PorousMedia</div>`;
  }
}

@customElement("app-root")
class AppRoot extends LitElement {
  static styles = css`
    :host { display: flex; flex-direction: column; height: 100vh; overflow: hidden; background: #777b7e; }
    .main { flex: 1; min-height: 0; display: grid; grid-template-columns: minmax(0, 840fr) minmax(0, 201fr) minmax(0, 1440fr); grid-template-rows: minmax(0, 1fr); gap: 6px; }
    .left { display: grid; grid-template-rows: auto minmax(0, 1fr) auto; gap: 6px; min-height: 0; }
  `;
  render() {
    return html`<title-bars></title-bars>
      <div class="main">
        <div class="left"><colormap-editor></colormap-editor><project-view></project-view><properties-panel></properties-panel></div>
        <scene-viewer></scene-viewer>
        <data-tables></data-tables>
      </div>`;
  }
}
